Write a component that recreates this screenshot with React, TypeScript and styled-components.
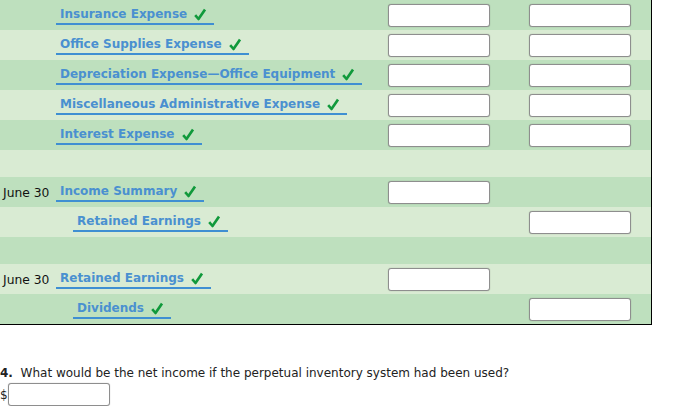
import styled, { createGlobalStyle } from 'styled-components';

const GlobalStyle = createGlobalStyle`
  body {
    margin: 0;
    background: #fff;
    font-family: 'DejaVu Sans', Verdana, sans-serif;
    font-size: 12px;
    color: #222;
  }
`;

type Line = {
  date?: string;
  account?: string;
  indent?: boolean;
  debit?: boolean;
  credit?: boolean;
};

const lines: Line[] = [
  { account: 'Insurance Expense', debit: true, credit: true },
  { account: 'Office Supplies Expense', debit: true, credit: true },
  { account: 'Depreciation Expense—Office Equipment', debit: true, credit: true },
  { account: 'Miscellaneous Administrative Expense', debit: true, credit: true },
  { account: 'Interest Expense', debit: true, credit: true },
  {},
  { date: 'June 30', account: 'Income Summary', debit: true },
  { account: 'Retained Earnings', indent: true, credit: true },
  {},
  { date: 'June 30', account: 'Retained Earnings', debit: true },
  { account: 'Dividends', indent: true, credit: true },
];

const Check = () => (
  <svg width="12" height="13" viewBox="0 0 12 13">
    <path
      d="M1.2 7.2 L4.5 11 L11 1.6"
      fill="none"
      stroke="#10993b"
      strokeWidth="2.6"
      strokeLinejoin="round"
    />
  </svg>
);

export default function App() {
  return (
    <>
      <GlobalStyle />
      <Journal>
        {lines.map((line, i) => (
          <Row key={i} $odd={i % 2 === 1} $blank={!line.account}>
            <DateCell>{line.date}</DateCell>
            <AccountCell>
              {line.account && (
                <AccountField $indent={line.indent}>
                  <span>{line.account}</span>
                  <Check />
                </AccountField>
              )}
            </AccountCell>
            <AmountCell $width={141}>{line.debit && <AmountInput />}</AmountCell>
            <AmountCell $width={122}>{line.credit && <AmountInput />}</AmountCell>
          </Row>
        ))}
      </Journal>
      <Question>
        <b>4.</b>&nbsp; What would be the net income if the perpetual inventory system had been used?
      </Question>
      <Answer>
        <span>$</span>
        <AmountInput />
      </Answer>
    </>
  );
}

const Journal = styled.div`
  width: 651px;
  border-right: 1px solid #000;
  border-bottom: 1px solid #000;
`;

const Row = styled.div<{ $odd: boolean; $blank: boolean }>`
  display: flex;
  align-items: center;
  height: ${(p) => (p.$blank ? 27 : 30)}px;
  background: ${(p) => (p.$odd ? '#d9ebd3' : '#bee0be')};
`;

const DateCell = styled.div`
  width: 53px;
  padding-left: 3px;
  padding-top: 1px;
  flex-shrink: 0;
  color: #111;
  font-size: 12.3px;
`;

const AccountCell = styled.div`
  flex: 1;
`;

const AccountField = styled.div<{ $indent?: boolean }>`
  display: inline-flex;
  align-items: center;
  gap: 7px;
  margin-left: ${(p) => (p.$indent ? 17 : 0)}px;
  padding: 2px 8px 1px 4px;
  line-height: 15px;
  border-bottom: 2px solid #3f8fd2;
  color: #4a90d0;
  font-weight: bold;
  font-size: 12px;
`;

const AmountCell = styled.div<{ $width: number }>`
  width: ${(p) => p.$width}px;
  flex-shrink: 0;
  display: flex;
  align-items: center;
`;

const AmountInput = styled.input.attrs({ type: 'text' })`
  box-sizing: border-box;
  width: 102px;
  height: 23px;
  margin: 0;
  border: 1px solid #8e8e8e;
  border-radius: 3px;
  background: #fff;
  box-shadow: 0 0 1px rgba(0, 0, 0, 0.35);
`;

const Question = styled.div`
  margin-top: 41px;
  line-height: 15px;
  color: #222;
`;

const Answer = styled.div`
  display: flex;
  align-items: center;
  margin-top: 2px;
  color: #222;
`;
